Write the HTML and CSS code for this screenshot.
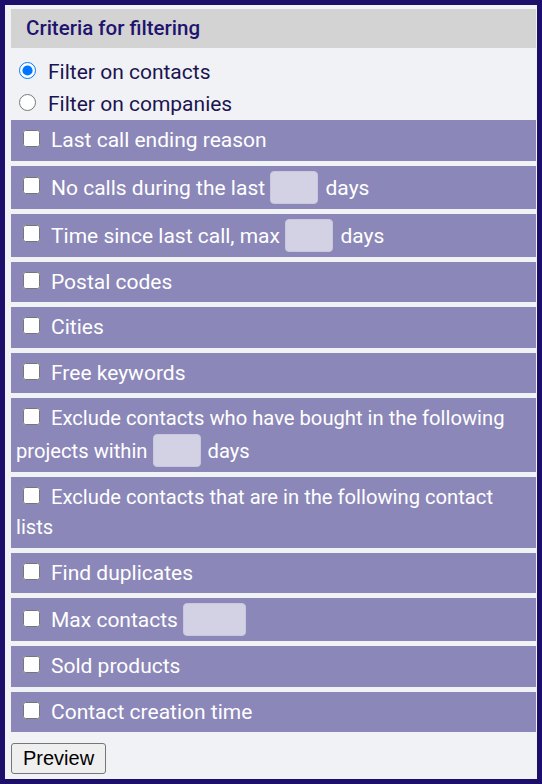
FILE: index.html
```html
<!DOCTYPE html>
<html lang="en">
<head>
<meta charset="utf-8">
<title>Criteria for filtering</title>
<link rel="stylesheet" href="styles.css">
</head>
<body>
<div class="frame">
  <div class="header">Criteria for filtering</div>
  <div class="radios">
    <label class="radio-row"><input type="radio" name="target" checked>Filter on contacts</label>
    <label class="radio-row"><input type="radio" name="target">Filter on companies</label>
  </div>
  <div class="criteria">
    <div class="crit"><input type="checkbox">Last call ending reason</div>
    <div class="crit"><input type="checkbox">No calls during the last <input type="text" class="num"> days</div>
    <div class="crit"><input type="checkbox">Time since last call, max <input type="text" class="num"> days</div>
    <div class="crit"><input type="checkbox">Postal codes</div>
    <div class="crit"><input type="checkbox">Cities</div>
    <div class="crit"><input type="checkbox">Free keywords</div>
    <div class="crit long"><input type="checkbox">Exclude contacts who have bought in the following projects within <input type="text" class="num"> days</div>
    <div class="crit long"><input type="checkbox">Exclude contacts that are in the following contact lists</div>
    <div class="crit"><input type="checkbox">Find duplicates</div>
    <div class="crit"><input type="checkbox">Max contacts <input type="text" class="num wide"></div>
    <div class="crit"><input type="checkbox">Sold products</div>
    <div class="crit"><input type="checkbox">Contact creation time</div>
  </div>
  <div class="actions"><button type="button" class="preview">Preview</button></div>
</div>
</body>
</html>
```
FILE: styles.css
```css
html, body {
  margin: 0;
  padding: 0;
  height: 100%;
}
body {
  font-family: Roboto, "Liberation Sans", sans-serif;
  background: #1c0f6c;
}
.frame {
  box-sizing: border-box;
  height: 100vh;
  border: 5px solid #1c0f6c;
  background: #f0f2f6;
  padding: 4px 1px 0 6px;
  overflow: hidden;
}
.header {
  height: 39px;
  box-sizing: border-box;
  background: #d3d3d3;
  color: #1e1470;
  font-size: 20.5px;
  font-weight: 500;
  line-height: 39px;
  padding-left: 15px;
}
.radios {
  display: flex;
  flex-direction: column;
  padding-top: 8px;
}
.radio-row {
  height: 32px;
  line-height: 32px;
  font-size: 21px;
  color: #1c1450;
}
.radio-row input {
  width: 17px;
  height: 17px;
  margin: 0 12px 0 8px;
  vertical-align: baseline;
}
.criteria {
  display: flex;
  flex-direction: column;
  gap: 5px;
}
.crit {
  background: #8b87b8;
  color: #ffffff;
  font-size: 21px;
  line-height: 30.5px;
  padding: 5px;
}
.crit.long {
  font-size: 20.2px;
}
.crit input[type="checkbox"] {
  width: 17px;
  height: 17px;
  margin: 0 11px 0 7px;
  vertical-align: baseline;
}
.num {
  box-sizing: border-box;
  width: 48px;
  height: 33px;
  margin: 0 2px 0 0;
  padding: 0 4px;
  font: inherit;
  line-height: normal;
  background: #d3d2e4;
  border: 1px solid #c9c7dd;
  border-radius: 4px;
  vertical-align: baseline;
}
.num.wide {
  width: 63px;
}
.actions {
  padding-top: 11px;
}
.preview {
  box-sizing: border-box;
  height: 31px;
  padding: 0 11px;
  font-family: "Liberation Sans", Arial, sans-serif;
  font-size: 20px;
  color: #000000;
  background: #efefef;
  border: 1px solid #767676;
  border-radius: 3px;
}
```
